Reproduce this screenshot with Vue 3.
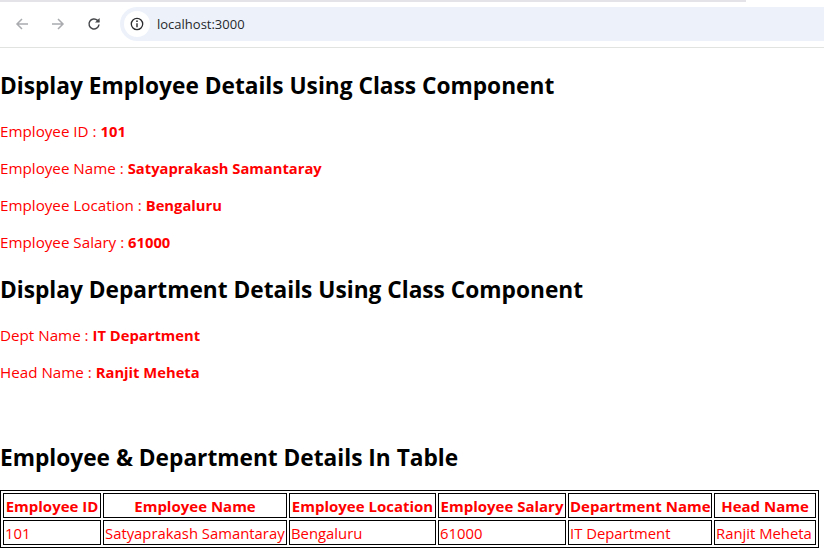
<script setup>
const employee = [
  ['Employee ID', '101'],
  ['Employee Name', 'Satyaprakash Samantaray'],
  ['Employee Location', 'Bengaluru'],
  ['Employee Salary', '61000'],
]
const dept = [
  ['Dept Name', 'IT Department'],
  ['Head Name', 'Ranjit Meheta'],
]
const heads = ['Employee ID', 'Employee Name', 'Employee Location', 'Employee Salary', 'Department Name', 'Head Name']
const cells = ['101', 'Satyaprakash Samantaray', 'Bengaluru', '61000', 'IT Department', 'Ranjit Meheta']
</script>

<template>
  <div class="page">
    <header class="browser">
      <div class="tabline"></div>
      <div class="toolbar">
        <svg class="nav first" viewBox="0 0 16 16" width="16" height="16"><path d="M14 8H3M8 3 3 8l5 5" fill="none" stroke="#a9abae" stroke-width="1.5"/></svg>
        <svg class="nav" viewBox="0 0 16 16" width="16" height="16"><path d="M2 8h11M8 3l5 5-5 5" fill="none" stroke="#a9abae" stroke-width="1.5"/></svg>
        <svg class="nav" viewBox="0 0 16 16" width="16" height="16"><path d="M13 8.5A5 5 0 1 1 11.5 4.4L13 5.8" fill="none" stroke="#46484b" stroke-width="1.5"/><path d="M13.6 2v4.6H9z" fill="#46484b"/></svg>
        <div class="omnibox">
          <span class="info-wrap">
            <svg viewBox="0 0 16 16" width="16" height="16"><circle cx="8" cy="8" r="5.7" fill="none" stroke="#2b2c2e" stroke-width="1.3"/><path d="M8 7.2v4" stroke="#2b2c2e" stroke-width="1.4"/><circle cx="8" cy="5.2" r=".9" fill="#2b2c2e"/></svg>
          </span>
          <span class="url">localhost:3000</span>
        </div>
      </div>
    </header>
    <main class="content">
      <h2 class="first-title">Display Employee Details Using Class Component</h2>
      <p v-for="row in employee" :key="row[0]">{{ row[0] }} : <b>{{ row[1] }}</b></p>
      <h2>Display Department Details Using Class Component</h2>
      <p v-for="row in dept" :key="row[0]">{{ row[0] }} : <b>{{ row[1] }}</b></p>
      <h2 class="table-title">Employee &amp; Department Details In Table</h2>
      <table>
        <thead><tr><th v-for="h in heads" :key="h">{{ h }}</th></tr></thead>
        <tbody><tr><td v-for="c in cells" :key="c">{{ c }}</td></tr></tbody>
      </table>
    </main>
  </div>
</template>

<style>
html, body { background: #fff; overflow: hidden; }
</style>

<style scoped>
.page { width: 824px; height: 558px; overflow: hidden; font-family: "Open Sans", "Noto Sans", sans-serif; }
.browser { height: 48px; box-sizing: border-box; border-bottom: 1px solid #e1e3e1; background: #fff; }
.tabline { width: 746px; height: 2px; background: #e3e3e8; }
.toolbar { display: flex; align-items: center; height: 34px; margin-top: 5px; }
.nav { margin-right: 20px; flex: none; }
.nav.first { margin-left: 14px; }
.omnibox { flex: 1; height: 34px; margin-left: -2px; border-radius: 17px 0 0 17px; background: #edf2fa; display: flex; align-items: center; padding-left: 4px; }
.info-wrap { width: 26px; height: 26px; border-radius: 50%; background: #fff; display: flex; align-items: center; justify-content: center; }
.url { margin-left: 7px; font-size: 13px; color: #26282b; }
.content { color: #000; display: flow-root; }
h2 { margin: 21px 0 19px; font-size: 22.7px; line-height: 32px; font-weight: 700; }
.first-title { margin-top: 22px; }
p { margin: 0 0 16px; color: #f00; font-size: 15.2px; line-height: 21px; }
p b { font-weight: 700; font-size: 14.75px; }
.table-title { margin-top: 59px; margin-bottom: 16px; }
table { table-layout: fixed; width: 819px; border: 1px solid #000; border-spacing: 2px; color: #f00; font-size: 15px; }
th, td { box-sizing: border-box; border: 1px solid #000; padding: 2px 1px 0; line-height: 21px; white-space: nowrap; overflow: hidden; }
td { text-align: left; font-weight: 400; font-size: 14.85px; }
th:nth-child(1) { width: 98px; }
th:nth-child(2) { width: 184px; }
th:nth-child(3) { width: 147px; }
th:nth-child(4) { width: 128px; }
th:nth-child(5) { width: 144px; }
th:nth-child(6) { width: 102px; }
</style>
